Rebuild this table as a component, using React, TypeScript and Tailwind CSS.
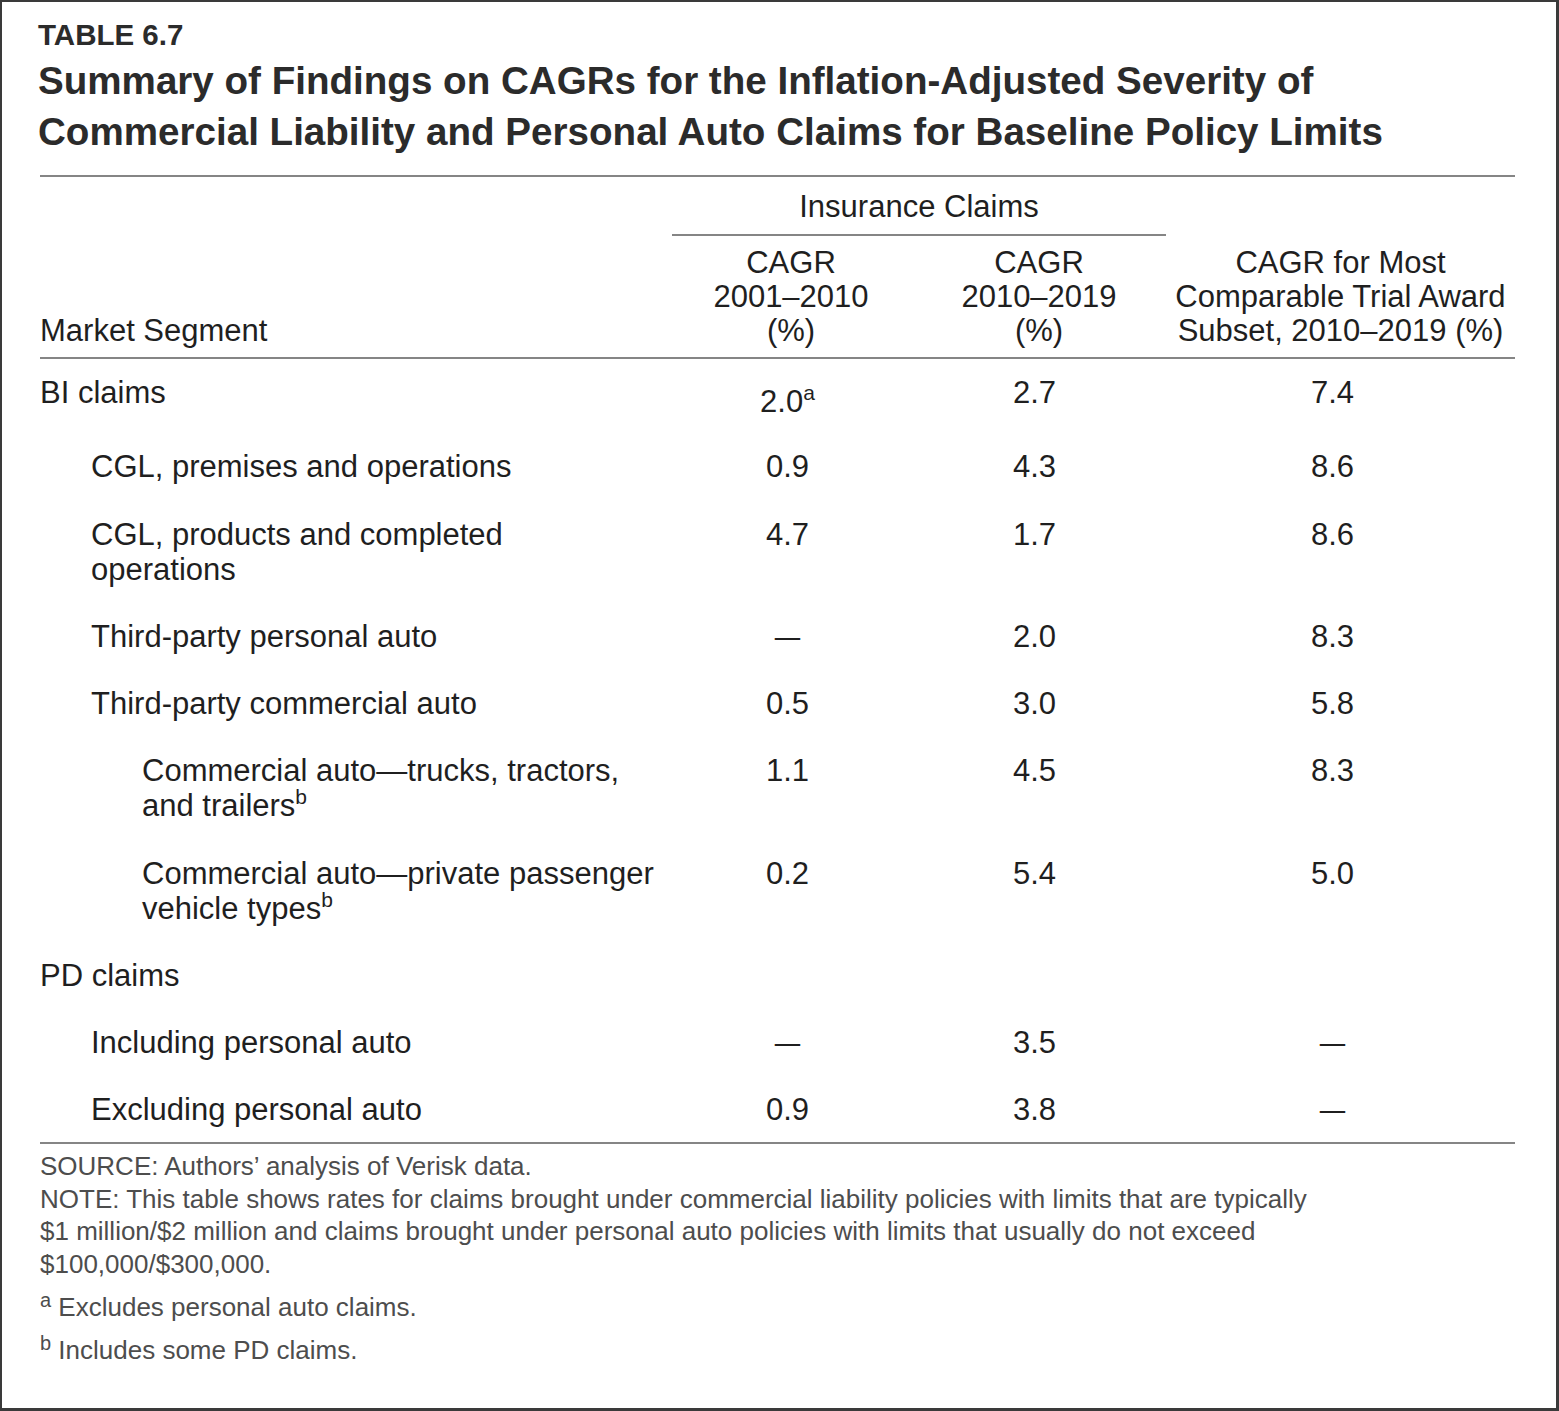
import React from 'react';

type Row = {
  label: React.ReactNode;
  level: 0 | 1 | 2;
  a: React.ReactNode;
  b: React.ReactNode;
  c: React.ReactNode;
  pad: string;
  lift?: boolean;
};

const Sup = ({ children }: { children: React.ReactNode }) => (
  <sup className="text-[21px] top-[-0.55em]">{children}</sup>
);

// dash used for empty cells, a little narrower than a full em dash
const Dash = () => <span className="inline-block scale-x-[0.82]">—</span>;

const rows: Row[] = [
  { label: 'BI claims', level: 0, a: <>2.0<Sup>a</Sup></>, b: '2.7', c: '7.4', pad: 'py-4', lift: true },
  { label: 'CGL, premises and operations', level: 1, a: '0.9', b: '4.3', c: '8.6', pad: 'pt-[14px] pb-4' },
  { label: <>CGL, products and completed<br />operations</>, level: 1, a: '4.7', b: '1.7', c: '8.6', pad: 'pt-[17px] pb-4' },
  { label: 'Third-party personal auto', level: 1, a: <Dash />, b: '2.0', c: '8.3', pad: 'py-4' },
  { label: 'Third-party commercial auto', level: 1, a: '0.5', b: '3.0', c: '5.8', pad: 'py-4' },
  {
    label: <>Commercial auto—trucks, tractors,<br />and trailers<Sup>b</Sup></>,
    level: 2, a: '1.1', b: '4.5', c: '8.3', pad: 'pt-4 pb-[17px]',
  },
  {
    label: <>Commercial auto—private passenger<br />vehicle types<Sup>b</Sup></>,
    level: 2, a: '0.2', b: '5.4', c: '5.0', pad: 'py-4',
  },
  { label: 'PD claims', level: 0, a: '', b: '', c: '', pad: 'py-4' },
  { label: 'Including personal auto', level: 1, a: <Dash />, b: '3.5', c: <Dash />, pad: 'py-4' },
  { label: 'Excluding personal auto', level: 1, a: '0.9', b: '3.8', c: <Dash />, pad: 'pt-4 pb-[15px]' },
];

const indent = ['pl-0', 'pl-[51px]', 'pl-[102px]'];

const App: React.FC = () => {
  return (
    <div className="w-[1559px] h-[1411px] bg-white border-2 border-r-[3px] border-b-[3px] border-[#3a3a3a] pt-[15px] pl-[36px] font-['Liberation_Sans',Arial,sans-serif] text-[#1f1f1f]">
      {/* Caption */}
      <div className="text-[29.5px] font-bold leading-[36px] text-[#2b2b2b]">TABLE 6.7</div>
      <h1 className="mt-0.5 text-[38.6px] font-bold leading-[51px] text-[#2b2b2b]">
        Summary of Findings on CAGRs for the Inflation-Adjusted Severity of
        <br />
        Commercial Liability and Personal Auto Claims for Baseline Policy Limits
      </h1>

      <div className="ml-[2px] w-[1475px] mt-[18px] text-[31px]">
        {/* Header */}
        <div className="flex items-end border-t-2 border-b-2 border-[#858585] leading-[34px]">
          <div className="w-[632px] pb-[9px]">Market Segment</div>
          <div className="w-[494px]">
            <div className="pt-[12px] pb-[10px] text-center leading-[35px] border-b-2 border-[#858585]">Insurance Claims</div>
            <div className="flex pt-[10px] pb-[9px]">
              <div className="w-[247px] pr-[9px] text-center">CAGR<br />2001–2010<br />(%)</div>
              <div className="w-[247px] pr-[7px] text-center">CAGR<br />2010–2019<br />(%)</div>
            </div>
          </div>
          <div className="w-[349px] pb-[9px] text-center">
            CAGR for Most<br />Comparable Trial Award<br />Subset, 2010–2019 (%)
          </div>
        </div>

        {/* Body */}
        <div className="border-b-2 border-[#858585] leading-[35px]">
          {rows.map((r, i) => (
            <div key={i} className={`grid grid-cols-[632px_247px_247px_349px] ${r.pad}`}>
              <div className={indent[r.level]}>{r.label}</div>
              <div className={r.lift ? 'pt-[9px] pr-4 text-center' : 'pr-4 text-center'}>{r.a}</div>
              <div className="pr-4 text-center">{r.b}</div>
              <div className="pr-4 text-center">{r.c}</div>
            </div>
          ))}
        </div>

        {/* Notes */}
        <div className="mt-[6px] text-[26px] leading-[32.5px] text-[#4d4d4d]">
          <p>SOURCE: Authors’ analysis of Verisk data.</p>
          <p>
            NOTE: This table shows rates for claims brought under commercial liability policies with limits that are typically
            <br />
            $1 million/$2 million and claims brought under personal auto policies with limits that usually do not exceed
            <br />
            $100,000/$300,000.
          </p>
          <p className="mt-[11px]">
            <sup className="text-[20px] top-[-0.45em]">a</sup> Excludes personal auto claims.
          </p>
          <p className="mt-[10px]">
            <sup className="text-[20px] top-[-0.45em]">b</sup> Includes some PD claims.
          </p>
        </div>
      </div>
    </div>
  );
};

export default App;
